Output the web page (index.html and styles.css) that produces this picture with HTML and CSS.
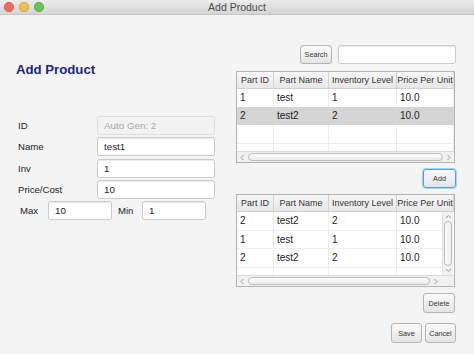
FILE: index.html
```html
<!DOCTYPE html>
<html>
<head>
<meta charset="utf-8">
<link rel="stylesheet" href="styles.css">
</head>
<body>
<div class="window">
  <div class="titlebar">
    <div class="lights">
      <span class="light red"></span>
      <span class="light yellow"></span>
      <span class="light green"></span>
    </div>
    <div class="title">Add Product</div>
  </div>
  <div class="content">
    <div class="left">
      <h1 class="heading">Add Product</h1>
      <div class="form">
        <div class="frow"><span class="lbl">ID</span><div class="field disabled">Auto Gen: 2</div></div>
        <div class="frow"><span class="lbl">Name</span><div class="field">test1</div></div>
        <div class="frow"><span class="lbl">Inv</span><div class="field">1</div></div>
        <div class="frow"><span class="lbl">Price/Cost</span><div class="field">10</div></div>
        <div class="frow minmax">
          <span class="lbl lmax">Max</span><div class="field small">10</div>
          <span class="lbl lmin">Min</span><div class="field small">1</div>
        </div>
      </div>
    </div>
    <div class="right">
      <div class="searchrow">
        <div class="btn search">Search</div>
        <div class="field sfield"></div>
      </div>
      <div class="table t1">
        <div class="trow head"><div class="c">Part ID</div><div class="c">Part Name</div><div class="c">Inventory Level</div><div class="c">Price Per Unit</div><div class="c"></div></div>
        <div class="trow"><div class="c">1</div><div class="c">test</div><div class="c">1</div><div class="c">10.0</div><div class="c"></div></div>
        <div class="trow sel"><div class="c">2</div><div class="c">test2</div><div class="c">2</div><div class="c">10.0</div><div class="c"></div></div>
        <div class="trow"><div class="c"></div><div class="c"></div><div class="c"></div><div class="c"></div><div class="c"></div></div>
        <div class="trow partial"><div class="c"></div><div class="c"></div><div class="c"></div><div class="c"></div><div class="c"></div></div>
        <div class="hscroll">
          <div class="arrow"><svg width="11" height="11" viewBox="0 0 11 11"><polyline points="6.5,3 4,5.5 6.5,8" fill="none" stroke="#9a9a9a" stroke-width="1"/></svg></div>
          <div class="thumb"></div>
          <div class="arrow"><svg width="11" height="11" viewBox="0 0 11 11"><polyline points="4.5,3 7,5.5 4.5,8" fill="none" stroke="#9a9a9a" stroke-width="1"/></svg></div>
        </div>
      </div>
      <div class="btnrow"><div class="btn add">Add</div></div>
      <div class="table t2">
        <div class="trow head"><div class="c">Part ID</div><div class="c">Part Name</div><div class="c">Inventory Level</div><div class="c">Price Per Unit</div><div class="c"></div></div>
        <div class="body2">
          <div class="rows">
            <div class="trow r2"><div class="c">2</div><div class="c">test2</div><div class="c">2</div><div class="c">10.0</div><div class="c"></div></div>
            <div class="trow r2"><div class="c">1</div><div class="c">test</div><div class="c">1</div><div class="c">10.0</div><div class="c"></div></div>
            <div class="trow r2"><div class="c">2</div><div class="c">test2</div><div class="c">2</div><div class="c">10.0</div><div class="c"></div></div>
            <div class="trow partial2"><div class="c"></div><div class="c"></div><div class="c"></div><div class="c"></div><div class="c"></div></div>
          </div>
          <div class="vscroll">
            <div class="varrow"><svg width="11" height="9" viewBox="0 0 11 9"><polyline points="3,6 5.5,3.5 8,6" fill="none" stroke="#9a9a9a" stroke-width="1"/></svg></div>
            <div class="vthumb"></div>
            <div class="varrow"><svg width="11" height="9" viewBox="0 0 11 9"><polyline points="3,3 5.5,5.5 8,3" fill="none" stroke="#9a9a9a" stroke-width="1"/></svg></div>
          </div>
        </div>
        <div class="hscroll">
          <div class="arrow"><svg width="11" height="11" viewBox="0 0 11 11"><polyline points="6.5,3 4,5.5 6.5,8" fill="none" stroke="#9a9a9a" stroke-width="1"/></svg></div>
          <div class="thumb"></div>
          <div class="arrow"><svg width="11" height="11" viewBox="0 0 11 11"><polyline points="4.5,3 7,5.5 4.5,8" fill="none" stroke="#9a9a9a" stroke-width="1"/></svg></div>
          <div class="corner"></div>
        </div>
      </div>
      <div class="btnrow"><div class="btn del">Delete</div></div>
      <div class="btnrow last"><div class="btn save">Save</div><div class="btn cancel">Cancel</div></div>
    </div>
  </div>
</div>
</body>
</html>
```

FILE: styles.css
```css
* { box-sizing: border-box; }
html, body { margin: 0; padding: 0; }
body {
  width: 474px; height: 354px; overflow: hidden;
  font-family: "Liberation Sans", Arial, sans-serif;
  color: #222;
  background: #f4f4f4;
}
.window { width: 474px; height: 354px; display: flex; flex-direction: column; }
.titlebar {
  height: 15px; flex: none;
  background: linear-gradient(#ebebeb, #d5d5d5);
  border-bottom: 1px solid #c4c4c4;
  display: flex; align-items: center; justify-content: center;
  position: relative;
}
.lights { position: absolute; left: 4px; top: 2px; display: flex; gap: 5.5px; }
.light { width: 9.5px; height: 9.5px; border-radius: 50%; display: block; }
.red { background: #ee6a5f; border: 0.5px solid #d6554a; }
.yellow { background: #f5be4f; border: 0.5px solid #d9a13c; }
.green { background: #62c554; border: 0.5px solid #4ea842; }
.title { font-size: 10.5px; color: #4a4a4a; line-height: 15px; }

.content { flex: 1; display: flex; background: #f4f4f4; }
.left { width: 236px; flex: none; }
.heading {
  margin: 47px 0 0 16px; font-size: 13.2px; font-weight: bold; line-height: 16px;
  color: #1c2580;
}
.form { margin: 38px 0 0 18px; display: flex; flex-direction: column; gap: 2.3px; }
.frow { display: flex; align-items: center; height: 19px; }
.lbl { font-size: 9.6px; width: 79px; flex: none; color: #222; }
.field {
  height: 19px; width: 118px; background: #fff;
  border: 1px solid #c9c9c9; border-radius: 2.5px;
  font-size: 9.8px; line-height: 17px; padding-left: 6px; color: #222;
  box-shadow: inset 0 1px 0 #eee;
}
.field.disabled { background: #f2f2f2; border-color: #dedede; color: #a8a8a8; box-shadow: none; }
.lmax { width: 30px; padding-left: 2px; }
.lmin { width: 24px; margin-left: 6px; }
.field.small { width: 64px; }

.right { width: 220px; flex: none; padding-top: 30px; display: flex; flex-direction: column; }
.searchrow { display: flex; justify-content: flex-end; gap: 6px; height: 19px; }
.sfield { width: 118px; }
.btn {
  height: 19px; border: 1px solid #b4b4b4; border-radius: 3px;
  background: linear-gradient(#fbfbfb, #e4e4e4);
  font-size: 7.2px; color: #333;
  display: flex; align-items: center; justify-content: center;
}
.search { width: 32px; }
.btnrow { display: flex; justify-content: flex-end; margin-top: 6px; }
.add { width: 33px; border-color: #4f9fe0; box-shadow: 0 0 0 1px #a9d3f5; }
.del { width: 32px; height: 20px; margin-right: 1px; }
.btnrow.last { margin-top: 10px; gap: 3px; }
.save, .cancel { width: 31px; height: 20px; }

.table {
  width: 219px; margin-top: 7px; border: 1px solid #b3b3b3; background: #fff;
  display: flex; flex-direction: column; overflow: hidden;
}
.t1 { height: 92px; }
.t2 { height: 93px; margin-top: 6px; }
.trow {
  display: grid; grid-template-columns: 37px 55px 68px 57px 1fr;
  height: 18px; font-size: 10px; line-height: 18px; flex: none;
}
.trow .c { border-right: 1px solid #ebebeb; padding-left: 3px; white-space: nowrap; overflow: hidden; }
.trow .c:last-child { border-right: none; }
.trow.head {
  height: 17px; line-height: 17px; font-size: 9px; color: #333;
  background: linear-gradient(#f7f7f7, #e7e7e7);
  border-bottom: 1px solid #cfcfcf;
}
.trow.head .c { border-right-color: #d2d2d2; padding-left: 0; text-align: center; text-overflow: clip; }
.trow.sel { background: #d4d4d4; }
.trow.sel .c { border-right-color: #d4d4d4; }
.trow.partial { height: 8px; border-top: 1px solid #efefef; }
.hscroll {
  height: 11px; flex: none; display: flex; align-items: center;
  background: #f1f1f1; border-top: 1px solid #dcdcdc; margin-top: auto;
}
.arrow { width: 11px; height: 10px; flex: none; display: flex; align-items: center; justify-content: center; }
.arrow svg { display: block; }
.thumb {
  flex: 1; height: 8px; border: 1px solid #bdbdbd; border-radius: 4px;
  background: linear-gradient(#fdfdfd, #ebebeb);
}
.corner { width: 13px; height: 10px; flex: none; background: #f1f1f1; }
.body2 { display: flex; flex: 1; overflow: hidden; }
.rows { flex: 1; overflow: hidden; }
.trow.r2 { height: 18.5px; line-height: 18.5px; border-bottom: 1px solid #efefef; }
.trow.partial2 { height: 8px; }
.vscroll {
  width: 11px; flex: none; margin-right: 1px; background: #f1f1f1;
  border-left: 1px solid #e0e0e0;
  display: flex; flex-direction: column; align-items: center;
}
.varrow { height: 9px; width: 11px; flex: none; }
.varrow svg { display: block; }
.vthumb {
  flex: 1; width: 8px; border: 1px solid #bdbdbd; border-radius: 4px;
  background: linear-gradient(90deg, #fdfdfd, #ebebeb);
}
```
